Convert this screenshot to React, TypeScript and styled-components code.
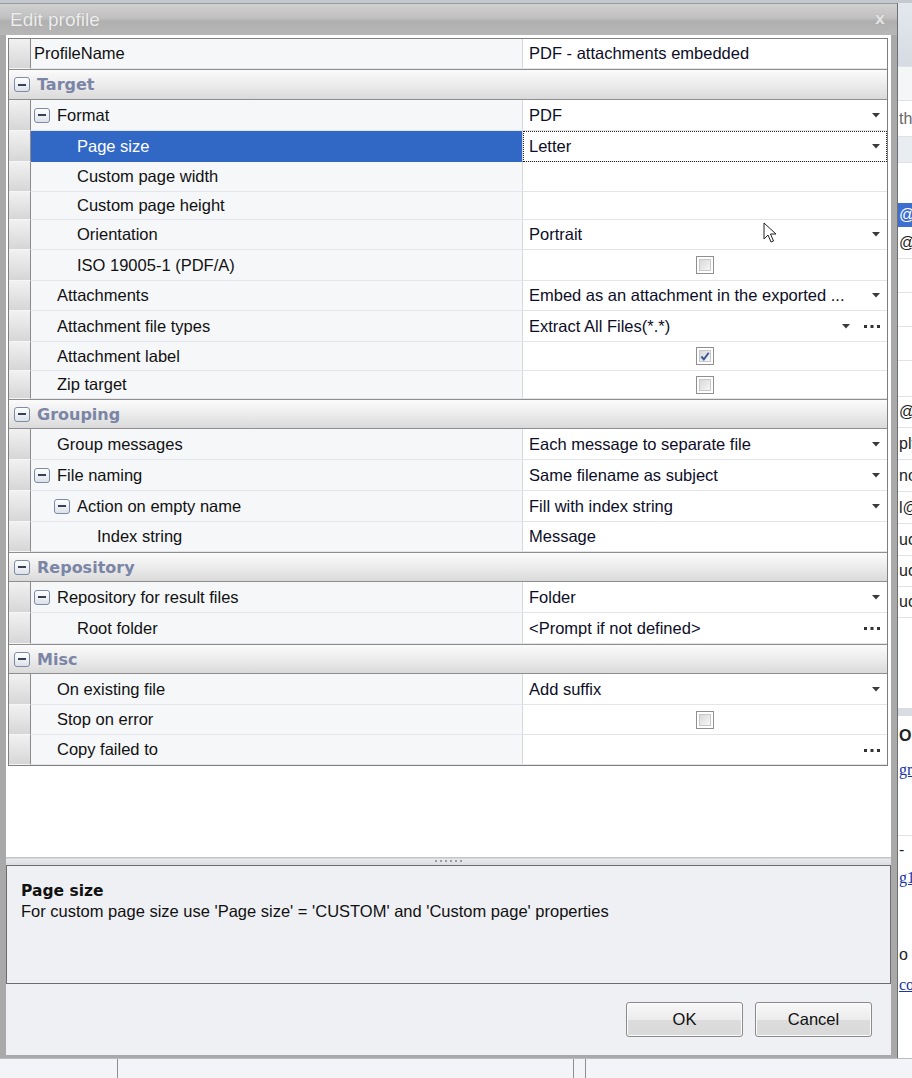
import React from 'react';
import styled, { createGlobalStyle } from 'styled-components';

const Global = createGlobalStyle`
  html, body { margin: 0; padding: 0; }
  body {
    width: 912px; height: 1078px; overflow: hidden;
    background: #eef0f4;
    font-family: "Liberation Sans", Arial, sans-serif;
  }
`;

const Desktop = styled.div`
  width: 912px; height: 1078px;
  display: flex; flex-direction: column;
  overflow: hidden; background: #eef0f4;
`;
const TopStrip = styled.div`
  height: 3px; flex: none; background: #c4c8cf;
`;
const Middle = styled.div`
  display: flex; height: 1055px; flex: none;
`;
const BottomStrip = styled.div`
  flex: 1; display: flex; background: #f3f4f7;
  border-top: 1px solid #b9bcc2;
`;
const BottomBox = styled.div<{ $w: number; $line?: boolean }>`
  width: ${p => p.$w}px; flex: none;
  border-right: ${p => (p.$line ? '1px solid #8c8f95' : 'none')};
`;

/* ---------- background app strip on the right ---------- */
const RightStrip = styled.div`
  flex: 1; display: flex; flex-direction: column;
  background: #ffffff; overflow: hidden;
  border-left: 1px solid #6d6f73;
`;
const BgItem = styled.div<{ $h: number; $bg?: string; $color?: string; $bold?: boolean; $link?: boolean; $line?: boolean }>`
  height: ${p => p.$h}px; flex: none;
  background: ${p => p.$bg || 'transparent'};
  color: ${p => p.$color || '#222'};
  font-family: ${p => (p.$link ? '"Liberation Serif", serif' : '"Liberation Sans", Arial, sans-serif')};
  font-size: 16px;
  font-weight: ${p => (p.$bold ? 700 : 400)};
  text-decoration: ${p => (p.$link ? 'underline' : 'none')};
  display: flex; align-items: center; padding-left: 1px;
  white-space: nowrap; box-sizing: border-box;
  border-bottom: ${p => (p.$line ? '1px solid #dfe2e7' : 'none')};
`;

/* ---------- dialog ---------- */
const Dialog = styled.div`
  width: 897px; height: 1055px; flex: none;
  display: flex; flex-direction: column;
  position: relative;
  background: #a9a9a9;
`;
const TitleBar = styled.div`
  height: 32px; flex: none;
  display: flex; align-items: center; justify-content: space-between;
  padding: 1px 10px 0 10px;
  background: linear-gradient(#d0d0d0 0%, #c0c0c0 45%, #b0b0b0 55%, #b7b7b7 100%);
  border-top: 1px solid #9a9a9a;
  box-sizing: border-box;
`;
const Title = styled.span`
  font-family: "Liberation Sans", Arial, sans-serif;
  font-size: 19px; color: #ededed;
  text-shadow: 0 0 1px #9a9a9a;
`;
const Close = styled.span`
  font-family: "DejaVu Sans", sans-serif; font-weight: 700;
  font-size: 16px; color: #e2e2e2; margin-right: 2px; margin-top: -4px;
  text-shadow: 0 0 1px #8a8a8a;
`;
const Frame = styled.div`
  flex: 1; display: flex; flex-direction: column;
  margin: 0 6px 3px 6px;
  background: #eff0f4;
  min-height: 0;
`;
const GridPanel = styled.div`
  height: 822px; flex: none; box-sizing: border-box;
  background: #ffffff;
  padding: 3px 3px 0 2px;
`;
const Grid = styled.div`
  border: 1px solid #7f7f7f;
  display: flex; flex-direction: column;
  background: #ffffff;
`;
const Row = styled.div<{ $h: number }>`
  height: ${p => p.$h}px; flex: none; display: flex;
  box-sizing: border-box;
  font-size: 16.5px; color: #111;
`;
const CatRow = styled(Row)`
  align-items: center;
  padding-left: 5px;
  background: linear-gradient(#fbfbfb 0%, #ececec 50%, #dadada 100%);
  border-top: 1px solid #8e8e8e;
  border-bottom: 1px solid #8e8e8e;
`;
const CatLabel = styled.span`
  font-family: "DejaVu Sans", sans-serif; font-weight: 700;
  font-size: 16px; color: #7b85a5; margin-left: 7px;
`;
const Gutter = styled.div`
  width: 22px; flex: none; box-sizing: border-box;
  border-right: 1px solid #8a8a8a;
  border-bottom: 1px solid #f6f6f6;
  background: linear-gradient(#f1f1f1 0%, #e4e4e4 50%, #d6d6d6 100%);
`;
const LabelCell = styled.div<{ $pad: number; $selected?: boolean }>`
  width: 492px; flex: none; box-sizing: border-box;
  display: flex; align-items: center;
  padding-left: ${p => p.$pad}px;
  background: ${p => (p.$selected ? '#3168c6' : '#f6f7f9')};
  color: ${p => (p.$selected ? '#ffffff' : '#111')};
  border-right: 1px solid #d6d9df;
  border-bottom: 1px solid ${p => (p.$selected ? '#3168c6' : '#e3e5ea')};
  white-space: nowrap;
`;
const ValueCell = styled.div<{ $focus?: boolean; $center?: boolean }>`
  flex: 1; box-sizing: border-box; min-width: 0;
  display: flex; align-items: center;
  justify-content: ${p => (p.$center ? 'center' : 'flex-start')};
  padding: 0 7px 0 6px;
  background: #ffffff;
  border-bottom: 1px solid #e3e5ea;
  outline: ${p => (p.$focus ? '1px dotted #222' : 'none')};
  outline-offset: -1px;
  white-space: nowrap;
`;
const ValueText = styled.span`
  flex: 1; overflow: hidden; color: #0d0d28;
`;
const Editors = styled.span`
  display: flex; align-items: center; gap: 14px; flex: none;
`;
const Expander = styled.span<{ $gap?: number }>`
  width: 16px; height: 15px; flex: none; box-sizing: border-box;
  border: 1px solid #7d8ba3; border-radius: 3px;
  background: linear-gradient(#ffffff, #dde2ea);
  display: inline-flex; align-items: center; justify-content: center;
  margin-right: ${p => (p.$gap === undefined ? 7 : p.$gap)}px;
  &::after { content: ''; width: 8px; height: 2px; background: #384055; }
`;
const CheckBox = styled.span`
  width: 18px; height: 18px; box-sizing: border-box;
  border: 1px solid #8f8f8f;
  background: #ffffff;
  display: inline-flex; align-items: center; justify-content: center;
`;
const CheckInner = styled.span`
  width: 12px; height: 12px;
  background: linear-gradient(135deg, #d9d9d9, #f7f7f7);
  border: 1px solid #c8c8c8; box-sizing: border-box;
  display: flex; align-items: center; justify-content: center;
`;

const Splitter = styled.div`
  height: 8px; flex: none;
  background: linear-gradient(#c3c5ca 0px, #c3c5ca 1px, #e9eaee 2px, #dcdde2 100%);
  display: flex; justify-content: center; align-items: center;
`;
const Description = styled.div`
  height: 119px; flex: none; box-sizing: border-box;
  border: 1px solid #6c6c6c;
  background: #eff0f4;
  padding: 15px 14px 0 14px;
`;
const DescTitle = styled.div`
  font-family: "DejaVu Sans", sans-serif; font-weight: 700;
  font-size: 15.5px; color: #111; line-height: 20px;
`;
const DescText = styled.div`
  font-size: 16.5px; color: #111; line-height: 21px;
`;
const ButtonBar = styled.div`
  flex: 1; display: flex; justify-content: flex-end; align-items: flex-start;
  gap: 12px; padding: 18px 19px 0 0;
`;
const Button = styled.button`
  width: 117px; height: 35px; box-sizing: border-box;
  border: 1px solid #8a8a8a; border-radius: 3px;
  background: linear-gradient(#f8f8f8 0%, #ececec 50%, #dcdcdc 51%, #d9d9d9 100%);
  box-shadow: inset 0 0 0 1px #fbfbfb;
  font-family: "Liberation Sans", Arial, sans-serif;
  font-size: 16.5px; color: #111; padding: 0;
`;
const Cursor = styled.svg`
  position: absolute; left: 763px; top: 219px;
`;

/* ---------- small drawings ---------- */
const DropArrow = () => (
  <svg width="8" height="5" viewBox="0 0 8 5"><path d="M0 0H8L4 4.5Z" fill="#3a3a3a" /></svg>
);
const Ellipsis = () => (
  <svg width="16" height="4" viewBox="0 0 16 4">
    <rect x="0" y="1" width="3" height="3" fill="#333" />
    <rect x="6.5" y="1" width="3" height="3" fill="#333" />
    <rect x="13" y="1" width="3" height="3" fill="#333" />
  </svg>
);
const Check = ({ checked }: { checked?: boolean }) => (
  <CheckBox>
    <CheckInner>
      {checked && (
        <svg width="11" height="11" viewBox="0 0 11 11">
          <path d="M1.5 5.5 L4.2 8.6 L9.6 1.4" stroke="#3f5c9c" strokeWidth="2.2" fill="none" />
        </svg>
      )}
    </CheckInner>
  </CheckBox>
);
const Grip = () => (
  <svg width="28" height="4" viewBox="0 0 28 4">
    {[0, 5, 10, 15, 20, 25].map(x => (
      <rect key={x} x={x} y="1" width="2" height="2" fill="#9a9ca2" />
    ))}
  </svg>
);

type Editor = 'drop' | 'ellipsis' | 'both' | 'check' | 'checked' | 'none';
type Item =
  | { kind: 'cat'; label: string; h: number }
  | { kind: 'prop'; label: string; h: number; level: number; exp?: boolean; value?: string; editor?: Editor; selected?: boolean };

const rows: Item[] = [
  { kind: 'prop', h: 30, label: 'ProfileName', level: 0, value: 'PDF - attachments embedded' },
  { kind: 'cat', h: 31, label: 'Target' },
  { kind: 'prop', h: 31, label: 'Format', level: 1, exp: true, value: 'PDF', editor: 'drop' },
  { kind: 'prop', h: 31, label: 'Page size', level: 2, value: 'Letter', editor: 'drop', selected: true },
  { kind: 'prop', h: 30, label: 'Custom page width', level: 2 },
  { kind: 'prop', h: 28, label: 'Custom page height', level: 2 },
  { kind: 'prop', h: 30, label: 'Orientation', level: 2, value: 'Portrait', editor: 'drop' },
  { kind: 'prop', h: 31, label: 'ISO 19005-1 (PDF/A)', level: 2, editor: 'check' },
  { kind: 'prop', h: 30, label: 'Attachments', level: 1, value: 'Embed as an attachment in the exported ...', editor: 'drop' },
  { kind: 'prop', h: 31, label: 'Attachment file types', level: 1, value: 'Extract All Files(*.*)', editor: 'both' },
  { kind: 'prop', h: 29, label: 'Attachment label', level: 1, editor: 'checked' },
  { kind: 'prop', h: 28, label: 'Zip target', level: 1, editor: 'check' },
  { kind: 'cat', h: 30, label: 'Grouping' },
  { kind: 'prop', h: 31, label: 'Group messages', level: 1, value: 'Each message to separate file', editor: 'drop' },
  { kind: 'prop', h: 31, label: 'File naming', level: 1, exp: true, value: 'Same filename as subject', editor: 'drop' },
  { kind: 'prop', h: 31, label: 'Action on empty name', level: 2, exp: true, value: 'Fill with index string', editor: 'drop' },
  { kind: 'prop', h: 30, label: 'Index string', level: 3, value: 'Message' },
  { kind: 'cat', h: 30, label: 'Repository' },
  { kind: 'prop', h: 31, label: 'Repository for result files', level: 1, exp: true, value: 'Folder', editor: 'drop' },
  { kind: 'prop', h: 31, label: 'Root folder', level: 2, value: '<Prompt if not defined>', editor: 'ellipsis' },
  { kind: 'cat', h: 30, label: 'Misc' },
  { kind: 'prop', h: 31, label: 'On existing file', level: 1, value: 'Add suffix', editor: 'drop' },
  { kind: 'prop', h: 30, label: 'Stop on error', level: 1, editor: 'check' },
  { kind: 'prop', h: 30, label: 'Copy failed to', level: 1, editor: 'ellipsis' },
];

const textPad = (level: number) => (level === 0 ? 3 : 26 + 20 * (level - 1));

const PropRow = ({ item }: { item: Extract<Item, { kind: 'prop' }> }) => {
  const pad = textPad(item.level);
  const editor = item.editor || 'none';
  const isCheck = editor === 'check' || editor === 'checked';
  return (
    <Row $h={item.h}>
      <Gutter />
      <LabelCell $pad={item.exp ? pad - 23 : pad} $selected={item.selected}>
        {item.exp && <Expander />}
        {item.label}
      </LabelCell>
      <ValueCell $focus={item.selected} $center={isCheck}>
        {isCheck ? (
          <Check checked={editor === 'checked'} />
        ) : (
          <>
            <ValueText>{item.value || ''}</ValueText>
            <Editors>
              {(editor === 'drop' || editor === 'both') && <DropArrow />}
              {(editor === 'ellipsis' || editor === 'both') && <Ellipsis />}
            </Editors>
          </>
        )}
      </ValueCell>
    </Row>
  );
};

const bgItems: { h: number; t?: string; bg?: string; color?: string; bold?: boolean; link?: boolean; line?: boolean }[] = [
  { h: 64, bg: 'linear-gradient(#e4e8ee, #d6dbe3)', line: true },
  { h: 34, bg: '#f5f6f8', line: true },
  { h: 36, t: 'th', color: '#666', line: true },
  { h: 26, bg: '#e9ecf1', line: true },
  { h: 40 },
  { h: 24, t: '@g', bg: '#3d6fd0', color: '#fff' },
  { h: 32, t: '@g', line: true },
  { h: 34, line: true },
  { h: 34, line: true },
  { h: 34, line: true },
  { h: 36, line: true },
  { h: 31, t: '@y', line: true },
  { h: 32, t: 'ply', line: true },
  { h: 32, t: 'no-', line: true },
  { h: 32, t: 'l@', line: true },
  { h: 32, t: 'uc', line: true },
  { h: 31, t: 'uc', line: true },
  { h: 31, t: 'uc', line: true },
  { h: 90 },
  { h: 8, bg: '#d9dce2' },
  { h: 40, t: 'O', bold: true },
  { h: 28, t: 'gr', link: true, color: '#1a35a8' },
  { h: 52, line: true },
  { h: 28, t: '-' },
  { h: 28, t: 'g1', link: true, color: '#1a35a8' },
  { h: 48 },
  { h: 30, t: 'o' },
  { h: 30, t: 'co', link: true, color: '#1a35a8' },
];

export default function App() {
  return (
    <>
      <Global />
      <Desktop>
        <TopStrip />
        <Middle>
          <Dialog>
            <TitleBar>
              <Title>Edit profile</Title>
              <Close>x</Close>
            </TitleBar>
            <Frame>
              <GridPanel>
                <Grid>
                  {rows.map((r, i) =>
                    r.kind === 'cat' ? (
                      <CatRow key={i} $h={r.h}>
                        <Expander $gap={0} />
                        <CatLabel>{r.label}</CatLabel>
                      </CatRow>
                    ) : (
                      <PropRow key={i} item={r} />
                    )
                  )}
                </Grid>
              </GridPanel>
              <Splitter>
                <Grip />
              </Splitter>
              <Description>
                <DescTitle>Page size</DescTitle>
                <DescText>For custom page size use 'Page size' = 'CUSTOM' and 'Custom page' properties</DescText>
              </Description>
              <ButtonBar>
                <Button>OK</Button>
                <Button>Cancel</Button>
              </ButtonBar>
            </Frame>
            <Cursor width="14" height="22" viewBox="0 0 14 22">
              <path d="M1 1 L1 17 L5 13 L8 20 L10.5 19 L7.5 12 L13 12 Z" fill="#fff" stroke="#222" strokeWidth="1" strokeLinejoin="round" />
            </Cursor>
          </Dialog>
          <RightStrip>
            {bgItems.map((b, i) => (
              <BgItem key={i} $h={b.h} $bg={b.bg} $color={b.color} $bold={b.bold} $link={b.link} $line={b.line}>
                {b.t}
              </BgItem>
            ))}
          </RightStrip>
        </Middle>
        <BottomStrip>
          <BottomBox $w={117} $line />
          <BottomBox $w={455} $line />
          <BottomBox $w={11} $line />
        </BottomStrip>
      </Desktop>
    </>
  );
}
